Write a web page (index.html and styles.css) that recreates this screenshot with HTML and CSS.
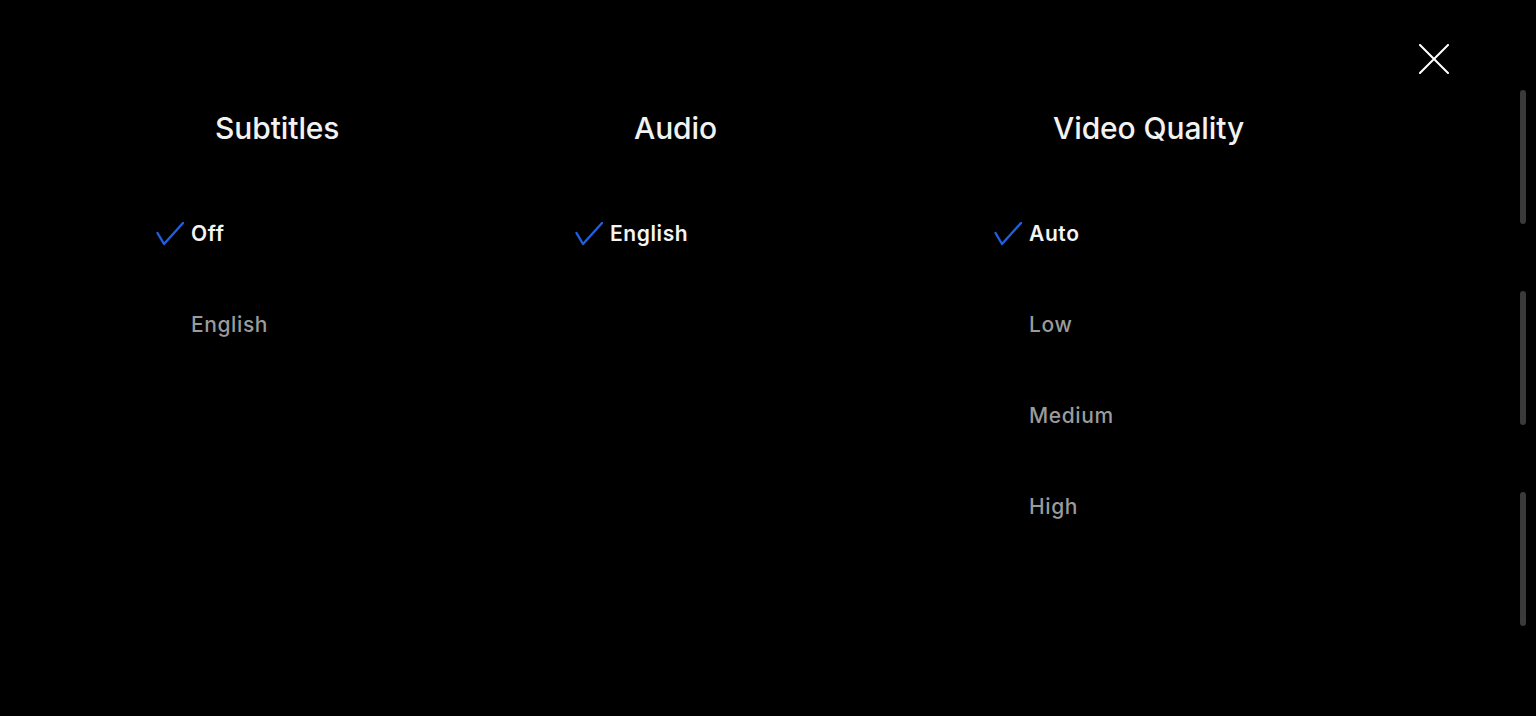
FILE: index.html
```html
<!DOCTYPE html>
<html lang="en">
<head>
<meta charset="utf-8">
<title>Settings</title>
<link rel="stylesheet" href="styles.css">
</head>
<body>
<div class="page">
  <div class="columns">
    <section class="col">
      <h2 class="col-title">Subtitles</h2>
      <ul class="options">
        <li class="opt selected"><span class="check"><svg width="28" height="24" viewBox="0 0 28 24"><path d="M1.5 11 L8 22 L27 1" fill="none" stroke="#1f5fe0" stroke-width="2.4" stroke-linecap="round" stroke-linejoin="round"/></svg></span><span class="label">Off</span></li>
        <li class="opt"><span class="check"></span><span class="label">English</span></li>
      </ul>
    </section>
    <section class="col">
      <h2 class="col-title">Audio</h2>
      <ul class="options">
        <li class="opt selected"><span class="check"><svg width="28" height="24" viewBox="0 0 28 24"><path d="M1.5 11 L8 22 L27 1" fill="none" stroke="#1f5fe0" stroke-width="2.4" stroke-linecap="round" stroke-linejoin="round"/></svg></span><span class="label">English</span></li>
      </ul>
    </section>
    <section class="col">
      <h2 class="col-title">Video Quality</h2>
      <ul class="options">
        <li class="opt selected"><span class="check"><svg width="28" height="24" viewBox="0 0 28 24"><path d="M1.5 11 L8 22 L27 1" fill="none" stroke="#1f5fe0" stroke-width="2.4" stroke-linecap="round" stroke-linejoin="round"/></svg></span><span class="label">Auto</span></li>
        <li class="opt"><span class="check"></span><span class="label">Low</span></li>
        <li class="opt"><span class="check"></span><span class="label">Medium</span></li>
        <li class="opt"><span class="check"></span><span class="label">High</span></li>
      </ul>
    </section>
  </div>
  <div class="rail">
    <span class="bar"></span>
    <span class="bar"></span>
    <span class="bar"></span>
  </div>
  <button class="close" aria-label="Close"><svg width="30" height="30" viewBox="0 0 30 30"><path d="M1 1 L29 29 M29 1 L1 29" stroke="#ffffff" stroke-width="2" stroke-linecap="square"/></svg></button>
</div>
</body>
</html>
```

FILE: styles.css
```css
html, body {
  margin: 0;
  padding: 0;
  background: #000;
}
body {
  font-family: "Inter", "Open Sans", "Liberation Sans", sans-serif;
  color: #fff;
  width: 1536px;
  height: 716px;
  overflow: hidden;
}
.page {
  position: relative;
  display: flex;
  height: 716px;
}
.columns {
  display: flex;
  padding-left: 156px;
  padding-top: 110px;
  flex: 1;
}
.col {
  width: 419px;
}
.col-title {
  margin: 0 0 42px 59px;
  font-size: 30px;
  line-height: 36px;
  font-weight: 500;
  color: #f2f2f2;
  letter-spacing: -0.1px;
}
.options {
  list-style: none;
  margin: 0;
  padding: 0;
}
.opt {
  display: flex;
  align-items: center;
  height: 91px;
}
.check {
  width: 35px;
  display: flex;
  align-items: center;
}
.check svg {
  display: block;
}
.label {
  font-size: 21px;
  font-weight: 500;
  color: #9b9b9b;
  letter-spacing: 0.6px;
}
.opt.selected .label {
  color: #f4f4f4;
  font-weight: 600;
}
.rail {
  width: 6px;
  padding-top: 90px;
  display: flex;
  flex-direction: column;
  gap: 67px;
  margin-right: 10px;
}
.bar {
  display: block;
  width: 6px;
  height: 134px;
  border-radius: 3px;
  background: #3a3a3a;
}
.close {
  position: absolute;
  top: 44px;
  left: 1419px;
  width: 30px;
  height: 30px;
  padding: 0;
  border: 0;
  background: transparent;
}
.close svg {
  display: block;
}
```
